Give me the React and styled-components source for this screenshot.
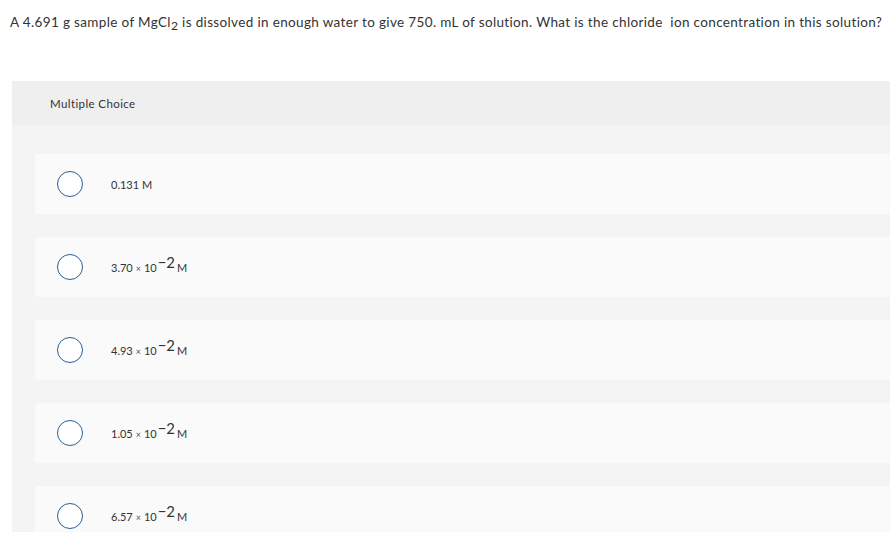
import React from 'react';
import styled, { createGlobalStyle } from 'styled-components';

const GlobalStyle = createGlobalStyle`
  body {
    margin: 0;
    background: #fff;
    font-family: Lato, "Liberation Sans", Arial, sans-serif;
    color: #333;
  }
`;

const Page = styled.div`
  height: 532px;
  overflow: hidden;
`;

const Question = styled.p`
  margin: 0;
  padding: 12px 0 0 10px;
  height: 81px;
  box-sizing: border-box;
  font-size: 13.5px;
  letter-spacing: 0.35px;
  line-height: 20px;
  white-space: nowrap;
  color: #333;
`;

const Sub = styled.sub`
  font-size: 0.9em;
  vertical-align: -3px;
  line-height: 0;
`;

const Panel = styled.section`
  margin-left: 12px;
  width: 900px;
`;

const PanelHeader = styled.div`
  height: 45px;
  display: flex;
  align-items: center;
  padding-left: 38px;
  background: #efefef;
  font-size: 11.5px;
  letter-spacing: 0.4px;
  color: #333;
`;

const PanelBody = styled.div`
  background: #f4f4f4;
  padding: 28px 0 40px 23px;
  display: flex;
  flex-direction: column;
  gap: 23px;
`;

const Choice = styled.label`
  height: 60px;
  display: flex;
  align-items: center;
  padding-left: 22px;
  background: #fafafa;
  border-radius: 3px 0 0 3px;
  font-size: 11px;
  color: #333;
`;

const Radio = styled.span`
  width: 24px;
  height: 24px;
  border: 1.5px solid #2a5f95;
  border-radius: 50%;
  background: #fff;
  margin-right: 28px;
  flex-shrink: 0;
`;

const Times = styled.span`
  font-size: 9px;
  color: #555;
  margin: 0 3px;
`;

const Sup = styled.sup`
  font-size: 1.35em;
  vertical-align: 4px;
  line-height: 0;
  margin-left: 1px;
  margin-right: 2px;
`;

const choices = [
  { value: '0.131', exp: null },
  { value: '3.70', exp: '−2' },
  { value: '4.93', exp: '−2' },
  { value: '1.05', exp: '−2' },
  { value: '6.57', exp: '−2' },
];

export default function App() {
  return (
    <Page>
      <GlobalStyle />
      <Question>
        A 4.691 g sample of MgCl<Sub>2</Sub> is dissolved in enough water to give 750. mL of solution. What is the chloride&nbsp; ion concentration in this solution?
      </Question>
      <Panel>
        <PanelHeader>Multiple Choice</PanelHeader>
        <PanelBody>
          {choices.map((c) => (
            <Choice key={c.value}>
              <Radio />
              {c.exp ? (
                <span>
                  {c.value}
                  <Times>×</Times>10<Sup>{c.exp}</Sup>M
                </span>
              ) : (
                <span>{c.value} M</span>
              )}
            </Choice>
          ))}
        </PanelBody>
      </Panel>
    </Page>
  );
}
